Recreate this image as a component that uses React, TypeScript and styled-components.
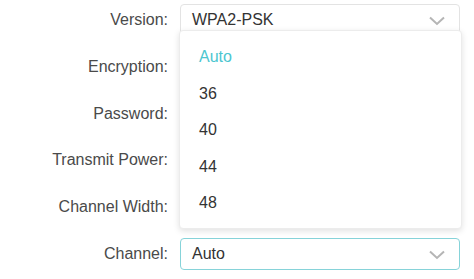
import React from "react";
import styled, { createGlobalStyle } from "styled-components";

const GlobalStyle = createGlobalStyle`
  body {
    margin: 0;
    background: #ffffff;
    font-family: "Liberation Sans", Arial, sans-serif;
  }
`;

const Form = styled.div`
  display: grid;
  grid-template-columns: 168px 280px;
  column-gap: 12px;
  row-gap: 14.8px;
  padding-top: 4px;
  width: 474px;
`;

const Label = styled.div`
  height: 32px;
  display: flex;
  align-items: center;
  justify-content: flex-end;
  font-size: 16px;
  color: #4a4a4a;
`;

const Select = styled.div<{ $active?: boolean }>`
  position: relative;
  box-sizing: border-box;
  height: 32px;
  border: 1px solid ${({ $active }) => ($active ? "#86d3d9" : "#e3e3e3")};
  border-radius: 4px;
  display: flex;
  align-items: center;
  padding-left: 11px;
  font-size: 16px;
  color: #333333;
`;

const Chevron = styled.svg`
  position: absolute;
  right: 13px;
  top: 11px;
`;

const Menu = styled.ul`
  position: absolute;
  top: 25px;
  left: -2px;
  width: 283px;
  box-sizing: border-box;
  margin: 0;
  padding: 8px 0 6px;
  list-style: none;
  background: #ffffff;
  border: 1px solid #ececec;
  border-radius: 4px;
  box-shadow: 0 2px 6px rgba(0, 0, 0, 0.12);
  z-index: 2;
`;

const Option = styled.li<{ $selected?: boolean }>`
  height: 36.5px;
  display: flex;
  align-items: center;
  padding-left: 19px;
  font-size: 16px;
  color: ${({ $selected }) => ($selected ? "#4cc6d0" : "#333333")};
`;

const Arrow = () => (
  <Chevron width="18" height="10" viewBox="0 0 18 10">
    <path d="M2 1.5 L9 8 L16 1.5" fill="none" stroke="#b5b5b5" strokeWidth="2" />
  </Chevron>
);

const channels = ["Auto", "36", "40", "44", "48"];

export default function App() {
  return (
    <>
      <GlobalStyle />
      <Form>
        <Label>Version:</Label>
        <Select>
          WPA2-PSK
          <Arrow />
          <Menu>
            {channels.map((c, i) => (
              <Option key={c} $selected={i === 0}>
                {c}
              </Option>
            ))}
          </Menu>
        </Select>
        <Label>Encryption:</Label>
        <Select />
        <Label>Password:</Label>
        <Select />
        <Label>Transmit Power:</Label>
        <Select />
        <Label>Channel Width:</Label>
        <Select />
        <Label>Channel:</Label>
        <Select $active>
          Auto
          <Arrow />
        </Select>
      </Form>
    </>
  );
}
